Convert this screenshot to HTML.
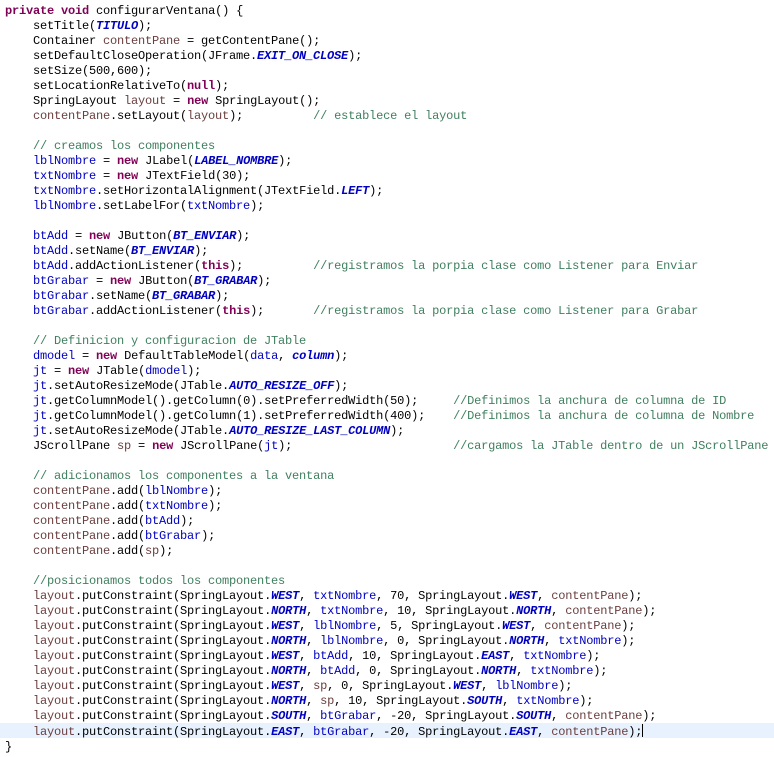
<!DOCTYPE html>
<html><head><style>
body{margin:0;background:#fff;width:774px;height:757px;overflow:hidden}
pre{margin:0;padding:4px 0 0 5px;font-family:"Liberation Mono",monospace;font-size:12px;letter-spacing:-0.2px;line-height:15px;color:#000}
.k{color:#7F0055;font-weight:bold}
.f{color:#0000C0}
.c{color:#0000C0;font-style:italic;font-weight:bold}
.l{color:#6A3E3E}
.m{color:#3F7F5F}
.hl{position:absolute;left:0;top:723px;width:774px;height:15px;background:#E8F2FE;z-index:-1}
.cur{display:inline-block;width:1px;height:13px;background:#000;vertical-align:-2px}
</style></head><body>
<div class="hl"></div>
<pre><span class="k">private</span> <span class="k">void</span> configurarVentana() {
    setTitle(<span class="c">TITULO</span>);
    Container <span class="l">contentPane</span> = getContentPane();
    setDefaultCloseOperation(JFrame.<span class="c">EXIT_ON_CLOSE</span>);
    setSize(500,600);
    setLocationRelativeTo(<span class="k">null</span>);
    SpringLayout <span class="l">layout</span> = <span class="k">new</span> SpringLayout();
    <span class="l">contentPane</span>.setLayout(<span class="l">layout</span>);          <span class="m">// establece el layout</span>

    <span class="m">// creamos los componentes</span>
    <span class="f">lblNombre</span> = <span class="k">new</span> JLabel(<span class="c">LABEL_NOMBRE</span>);
    <span class="f">txtNombre</span> = <span class="k">new</span> JTextField(30);
    <span class="f">txtNombre</span>.setHorizontalAlignment(JTextField.<span class="c">LEFT</span>);
    <span class="f">lblNombre</span>.setLabelFor(<span class="f">txtNombre</span>);

    <span class="f">btAdd</span> = <span class="k">new</span> JButton(<span class="c">BT_ENVIAR</span>);
    <span class="f">btAdd</span>.setName(<span class="c">BT_ENVIAR</span>);
    <span class="f">btAdd</span>.addActionListener(<span class="k">this</span>);          <span class="m">//registramos la porpia clase como Listener para Enviar</span>
    <span class="f">btGrabar</span> = <span class="k">new</span> JButton(<span class="c">BT_GRABAR</span>);
    <span class="f">btGrabar</span>.setName(<span class="c">BT_GRABAR</span>);
    <span class="f">btGrabar</span>.addActionListener(<span class="k">this</span>);       <span class="m">//registramos la porpia clase como Listener para Grabar</span>

    <span class="m">// Definicion y configuracion de JTable</span>
    <span class="f">dmodel</span> = <span class="k">new</span> DefaultTableModel(<span class="f">data</span>, <span class="c">column</span>);
    <span class="f">jt</span> = <span class="k">new</span> JTable(<span class="f">dmodel</span>);
    <span class="f">jt</span>.setAutoResizeMode(JTable.<span class="c">AUTO_RESIZE_OFF</span>);
    <span class="f">jt</span>.getColumnModel().getColumn(0).setPreferredWidth(50);     <span class="m">//Definimos la anchura de columna de ID</span>
    <span class="f">jt</span>.getColumnModel().getColumn(1).setPreferredWidth(400);    <span class="m">//Definimos la anchura de columna de Nombre</span>
    <span class="f">jt</span>.setAutoResizeMode(JTable.<span class="c">AUTO_RESIZE_LAST_COLUMN</span>);
    JScrollPane <span class="l">sp</span> = <span class="k">new</span> JScrollPane(<span class="f">jt</span>);                       <span class="m">//cargamos la JTable dentro de un JScrollPane</span>

    <span class="m">// adicionamos los componentes a la ventana</span>
    <span class="l">contentPane</span>.add(<span class="f">lblNombre</span>);
    <span class="l">contentPane</span>.add(<span class="f">txtNombre</span>);
    <span class="l">contentPane</span>.add(<span class="f">btAdd</span>);
    <span class="l">contentPane</span>.add(<span class="f">btGrabar</span>);
    <span class="l">contentPane</span>.add(<span class="l">sp</span>);

    <span class="m">//posicionamos todos los componentes</span>
    <span class="l">layout</span>.putConstraint(SpringLayout.<span class="c">WEST</span>, <span class="f">txtNombre</span>, 70, SpringLayout.<span class="c">WEST</span>, <span class="l">contentPane</span>);
    <span class="l">layout</span>.putConstraint(SpringLayout.<span class="c">NORTH</span>, <span class="f">txtNombre</span>, 10, SpringLayout.<span class="c">NORTH</span>, <span class="l">contentPane</span>);
    <span class="l">layout</span>.putConstraint(SpringLayout.<span class="c">WEST</span>, <span class="f">lblNombre</span>, 5, SpringLayout.<span class="c">WEST</span>, <span class="l">contentPane</span>);
    <span class="l">layout</span>.putConstraint(SpringLayout.<span class="c">NORTH</span>, <span class="f">lblNombre</span>, 0, SpringLayout.<span class="c">NORTH</span>, <span class="f">txtNombre</span>);
    <span class="l">layout</span>.putConstraint(SpringLayout.<span class="c">WEST</span>, <span class="f">btAdd</span>, 10, SpringLayout.<span class="c">EAST</span>, <span class="f">txtNombre</span>);
    <span class="l">layout</span>.putConstraint(SpringLayout.<span class="c">NORTH</span>, <span class="f">btAdd</span>, 0, SpringLayout.<span class="c">NORTH</span>, <span class="f">txtNombre</span>);
    <span class="l">layout</span>.putConstraint(SpringLayout.<span class="c">WEST</span>, <span class="l">sp</span>, 0, SpringLayout.<span class="c">WEST</span>, <span class="f">lblNombre</span>);
    <span class="l">layout</span>.putConstraint(SpringLayout.<span class="c">NORTH</span>, <span class="l">sp</span>, 10, SpringLayout.<span class="c">SOUTH</span>, <span class="f">txtNombre</span>);
    <span class="l">layout</span>.putConstraint(SpringLayout.<span class="c">SOUTH</span>, <span class="f">btGrabar</span>, -20, SpringLayout.<span class="c">SOUTH</span>, <span class="l">contentPane</span>);
    <span class="l">layout</span>.putConstraint(SpringLayout.<span class="c">EAST</span>, <span class="f">btGrabar</span>, -20, SpringLayout.<span class="c">EAST</span>, <span class="l">contentPane</span>);<span class="cur"></span>
}</pre>
</body></html>
